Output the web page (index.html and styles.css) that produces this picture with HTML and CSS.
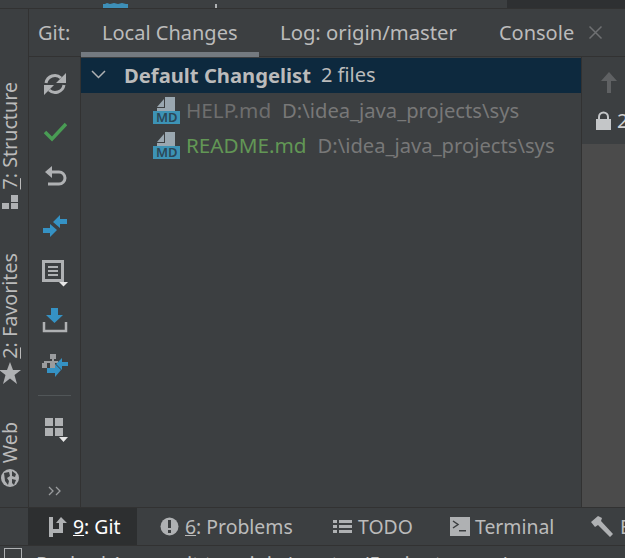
FILE: index.html
```html
<!DOCTYPE html>
<html lang="en">
  <head>
    <meta charset="UTF-8" />
    <title>Git tool window</title>
    <link rel="stylesheet" href="styles.css">
  </head>
  <body>
    <div class="top-strip">
      <div class="top-tree">
        <svg class="top-icon" width="25" height="8" viewBox="0 0 25 8"><path d="M0 4h2l2-1 3 1 4-1 4 1 4-1 4 1h2v4H0z" fill="#3d8fb8"/></svg>
        <span class="top-tick"></span>
      </div>
      <div class="top-editor"></div>
    </div>

    <div class="middle">
      <aside class="side-stripe">
        <div class="side-item side-structure">
          <svg width="18" height="18" viewBox="0 0 18 18"><path d="M1 11h7v6H1zM10 3h7v7h-7zM10 11h7v6h-7z" fill="#afb1b3"/></svg>
          <span class="side-label"><u>7</u>: Structure</span>
        </div>
        <div class="side-item side-favorites">
          <svg width="22" height="22" viewBox="0 0 22 22"><path d="M11 0l3 8h8l-6.500 5 2.500 9-7-5.500L4 22l2.500-9L0 8h8z" fill="#afb1b3"/></svg>
          <span class="side-label"><u>2</u>: Favorites</span>
        </div>
        <div class="side-item side-web">
          <svg width="20" height="20" viewBox="0 0 20 20"><circle cx="10" cy="10" r="9" fill="#afb1b3"/><path d="M4 5l5-1 1 4-3 2 2 3-1 4-3-4zM12 3l4 3-1 3-3-1zM12 11l4 1-2 5-2-2z" fill="#3c3f41"/></svg>
          <span class="side-label">Web</span>
        </div>
      </aside>

      <section class="tool-window">
        <header class="tabs">
          <span class="tabs-title">Git:</span>
          <span class="tab tab-active">Local Changes</span>
          <span class="tab tab-log">Log: origin/master</span>
          <span class="tab tab-console">Console</span>
          <svg class="tab-close" width="15" height="15" viewBox="0 0 15 15"><path d="M1.500 1.500l12 12M13.500 1.500l-12 12" stroke="#6e7072" stroke-width="1.500"/></svg>
        </header>

        <div class="panes">
          <nav class="toolbar">
            <span class="tool-slot"><svg width="24" height="24" viewBox="0 0 24 24"><path d="M3 11a9 9 0 0 1 15-5M21 13a9 9 0 0 1-15 5" fill="none" stroke="#afb1b3" stroke-width="3"/><path d="M23 1v10H13zM1 23V13h10z" fill="#afb1b3"/></svg></span>
            <span class="tool-slot"><svg width="24" height="24" viewBox="0 0 24 24"><path d="M2 13l7 7L23 5" fill="none" stroke="#499c54" stroke-width="3.500"/></svg></span>
            <span class="tool-slot"><svg width="24" height="24" viewBox="0 0 24 24"><path d="M8 6h8a6 6 0 0 1 0 12H5" fill="none" stroke="#afb1b3" stroke-width="3"/><path d="M9 0v12L2 6z" fill="#afb1b3"/></svg></span>
            <span class="tool-slot"><svg width="26" height="26" viewBox="0 0 26 26"><path d="M1 15h7v-4l7 6-7 7v-4H1zM25 11h-7v4l-7-6 7-7v4h7z" fill="#3592c4"/></svg></span>
            <span class="tool-slot"><svg width="28" height="28" viewBox="0 0 28 28"><path d="M2.500 2.500h19v19h-19z" fill="none" stroke="#afb1b3" stroke-width="3"/><path d="M7 7h10v2H7zM7 11h10v2H7zM7 15h10v2H7z" fill="#afb1b3"/><path d="M18 23h9l-4.500 4.500z" fill="#e6e6e6"/></svg></span>
            <span class="tool-slot"><svg width="26" height="26" viewBox="0 0 26 26"><path d="M9 1h7v7h5l-8.500 8L4 8h5z" fill="#3592c4"/><path d="M2 15v9h22v-9" fill="none" stroke="#afb1b3" stroke-width="2.500"/></svg></span>
            <span class="tool-slot"><svg width="28" height="28" viewBox="0 0 28 28"><path d="M9 1h6v5H9zM1 10h5v5H1zM9 10h5v5H9zM11 6h2v4h-2zM3 8h14v2H3z" fill="#9a9c9e"/><path d="M6 15h8v-4l6 6-6 7v-4H6zM27 13h-6v4l-6-6 6-6v4h6z" fill="#3592c4"/></svg></span>
            <span class="tool-sep"></span>
            <span class="tool-slot tool-slot-grid"><svg width="28" height="28" viewBox="0 0 28 28"><path d="M4 1h8v8H4zM14 1h8v8h-8zM4 11h8v8H4zM14 11h8v8h-8z" fill="#afb1b3"/><path d="M18 20h9l-4.500 5z" fill="#e6e6e6"/></svg></span>
            <svg class="tool-more" width="14" height="10" viewBox="0 0 14 10"><path d="M1 1l4 4-4 4M8 1l4 4-4 4" fill="none" stroke="#9a9c9e" stroke-width="1.300"/></svg>
          </nav>

          <main class="tree">
            <div class="changelist">
              <svg class="chevron" width="15" height="9" viewBox="0 0 15 9"><path d="M1 1l6.500 6.500L14 1" fill="none" stroke="#afb1b3" stroke-width="1.500"/></svg>
              <strong class="changelist-name">Default Changelist</strong>
              <span class="changelist-count">2 files</span>
            </div>
            <div class="file-row">
              <svg class="file-icon" width="27" height="27" viewBox="0 0 27 27"><path d="M12 0h10v15H4v-4h8zM4 10l7-8v8z" fill="#9aa7b0"/><rect y="14" width="27" height="13" fill="#3d93b5"/><text class="file-badge" x="3" y="25">MD</text></svg>
              <span class="file-name file-plain">HELP.md</span>
              <span class="file-path">D:\idea_java_projects\sys</span>
            </div>
            <div class="file-row">
              <svg class="file-icon" width="27" height="27" viewBox="0 0 27 27"><path d="M12 0h10v15H4v-4h8zM4 10l7-8v8z" fill="#9aa7b0"/><rect y="14" width="27" height="13" fill="#3d93b5"/><text class="file-badge" x="3" y="25">MD</text></svg>
              <span class="file-name file-new">README.md</span>
              <span class="file-path">D:\idea_java_projects\sys</span>
            </div>
          </main>

          <aside class="details">
            <div class="details-head">
              <svg class="details-arrow" width="18" height="22" viewBox="0 0 18 22"><path d="M9 1l8 9h-6v12H7V10H1z" fill="#5f6163"/></svg>
              <div class="details-lock">
                <svg width="15" height="20" viewBox="0 0 15 20"><path d="M3 9V6a4.500 4.500 0 0 1 9 0v3" fill="none" stroke="#c4c6c8" stroke-width="2"/><rect y="8" width="15" height="11" fill="#c4c6c8"/></svg>
                <span>2</span>
              </div>
            </div>
            <div class="details-body"></div>
          </aside>
        </div>
      </section>
    </div>

    <footer class="bottom-bar">
      <span class="bottom-tab bottom-tab-active">
        <svg width="20" height="20" viewBox="0 0 20 20"><path d="M0 0h4v20H0zM4 12h6V6H7l5-6 6 6h-4v10H4z" fill="#afb1b3"/></svg>
        <span><u>9</u>: Git</span>
      </span>
      <span class="bottom-tab bottom-tab-problems">
        <svg width="19" height="19" viewBox="0 0 19 19"><circle cx="9.500" cy="9.500" r="9" fill="#afb1b3"/><path d="M8 3h3v8H8zM8 13h3v3H8z" fill="#3c3f41"/></svg>
        <span><u>6</u>: Problems</span>
      </span>
      <span class="bottom-tab bottom-tab-todo">
        <svg width="19" height="16" viewBox="0 0 19 16"><path d="M0 1h4v3H0zM6 1h13v3H6zM0 6h4v3H0zM6 6h13v3H6zM0 11h4v3H0zM6 11h13v3H6z" fill="#afb1b3"/></svg>
        <span>TODO</span>
      </span>
      <span class="bottom-tab bottom-tab-terminal">
        <svg width="20" height="19" viewBox="0 0 20 19"><rect width="20" height="19" fill="#afb1b3"/><path d="M3 4l5 3.500L3 11" fill="none" stroke="#3c3f41" stroke-width="1.500"/><path d="M9 13h7v1.500H9z" fill="#3c3f41"/></svg>
        <span>Terminal</span>
      </span>
      <span class="bottom-tab bottom-tab-build">
        <svg width="23" height="22" viewBox="0 0 23 22"><path d="M0 6l7-6 4 2-1 3 12 13-3 3L7 9 4 11z" fill="#afb1b3"/></svg>
        <span>Build</span>
      </span>
    </footer>

    <div class="status-bar">
      <span class="status-box"></span>
      <span class="status-text">Pushed 1 commit to origin/master (5 minutes ago)</span>
    </div>
  </body>
</html>
```

FILE: styles.css
```css
* {
  box-sizing: border-box;
}

html, body {
  margin: 0;
  height: 100%;
}

body {
  display: flex;
  flex-direction: column;
  height: 558px;
  overflow: hidden;
  background-color: #3c3f41;
  color: #bbbbbb;
  font-family: "Noto Sans", sans-serif;
  font-size: 20px;
}

svg {
  display: block;
  flex: none;
}

/* strip of the editor above the tool window */
.top-strip {
  display: flex;
  flex: none;
  height: 9px;
  overflow: hidden;
  border-bottom: 1px solid #323232;
}

.top-tree {
  display: flex;
  gap: 87px;
  width: 507px;
  padding-left: 103px;
}

.top-tick {
  width: 2px;
  height: 8px;
  margin-top: 4px;
  background-color: #afb1b3;
}

.top-editor {
  flex: 1;
  background-color: #2e3032;
}

.middle {
  display: flex;
  flex: 1;
  min-height: 0;
}

.side-stripe {
  display: flex;
  flex: none;
  flex-direction: column;
  width: 29px;
  padding-top: 73px;
  border-right: 1px solid #323232;
}

.side-item {
  display: flex;
  flex-direction: column-reverse;
  align-items: center;
  gap: 3px;
  width: 20px;
}

.side-structure {
  height: 128px;
}

.side-favorites {
  margin-top: 44px;
  height: 130px;
}

.side-web {
  margin-top: 36px;
  height: 68px;
  gap: 5px;
}

.side-label {
  writing-mode: vertical-rl;
  transform: rotate(180deg);
  font-size: 19.700px;
  line-height: 20px;
  white-space: nowrap;
}

.tool-window {
  display: flex;
  flex: 1;
  flex-direction: column;
  min-width: 0;
}

.tabs {
  display: flex;
  flex: none;
  align-items: center;
  height: 48px;
  padding-left: 9px;
  border-bottom: 1px solid #323232;
}

.tabs-title {
  width: 43px;
  padding-bottom: 1px;
}

.tab {
  display: flex;
  align-items: center;
  height: 48px;
  margin-bottom: -1px;
  padding: 0 21px 2px;
  white-space: nowrap;
}

.tab-active {
  width: 178px;
  border-bottom: 5px solid #747a80;
  padding-top: 3px;
  padding-bottom: 0;
}

.tab-log {
  font-size: 20.300px;
}

.tab-console {
  padding: 0 0 2px 21px;
}

.tab-close {
  margin-left: 14px;
}

.panes {
  display: flex;
  flex: 1;
  min-height: 0;
}

.toolbar {
  display: flex;
  flex: none;
  flex-direction: column;
  align-items: center;
  width: 52px;
  padding-top: 3px;
  border-right: 1px solid #323232;
}

.tool-slot {
  display: flex;
  flex: none;
  align-items: center;
  justify-content: center;
  width: 30px;
  height: 47.300px;
}

.tool-sep {
  flex: none;
  width: 33px;
  height: 1px;
  margin: 4px 0 11px;
  background-color: #515658;
}

.tool-more {
  margin-top: 32px;
}

.tree {
  flex: 1;
  min-width: 0;
  padding-top: 1px;
}

.changelist {
  display: flex;
  align-items: center;
  height: 35px;
  padding-bottom: 2px;
  background-color: #0d293e;
}

.chevron {
  margin-left: 10px;
  margin-right: 18px;
}

.changelist-name {
  font-size: 20.200px;
  font-weight: 700;
  margin-right: 10px;
}

.file-row {
  display: flex;
  align-items: center;
  height: 35px;
  padding-left: 72px;
  white-space: nowrap;
}

.file-icon {
  margin-right: 6px;
}

.file-badge {
  fill: #2b4757;
  font-size: 13px;
  font-weight: 600;
}

.file-name {
  margin-right: 11px;
  padding-bottom: 2px;
  font-size: 20.700px;
}

.file-plain {
  color: #6e6e6e;
}

.file-new {
  color: #629755;
}

.file-path {
  padding-bottom: 2px;
  color: #787878;
  font-size: 20.200px;
}

.details {
  display: flex;
  flex: none;
  flex-direction: column;
  width: 44px;
  border-left: 1px solid #323232;
  overflow: hidden;
}

.details-head {
  flex: none;
  height: 87px;
  padding: 14px 0 0 18px;
}

.details-arrow {
  margin-bottom: 14px;
}

.details-lock {
  display: flex;
  align-items: center;
  gap: 6px;
  margin-left: -4px;
  color: #d0d0d0;
}

.details-body {
  flex: 1;
  background-color: #4b4b4b;
}

.bottom-bar {
  display: flex;
  flex: none;
  align-items: stretch;
  height: 39px;
  padding-left: 28px;
  border-top: 1px solid #323232;
  border-bottom: 1px solid #323232;
  font-size: 19.400px;
  overflow: hidden;
  white-space: nowrap;
}

.bottom-tab {
  display: flex;
  flex: none;
  align-items: center;
  gap: 6px;
  padding-left: 21px;
}

.bottom-tab-active {
  width: 109px;
  gap: 4px;
  background-color: #2d2f30;
  color: #ffffff;
}

.bottom-tab-problems {
  padding-left: 23px;
  width: 196px;
}

.bottom-tab-todo {
  padding-left: 0;
  width: 117px;
}

.bottom-tab-terminal {
  padding-left: 0;
  width: 141px;
  gap: 5px;
}

.bottom-tab-build {
  padding-left: 0;
}

.status-bar {
  display: flex;
  flex: none;
  align-items: flex-start;
  gap: 14px;
  height: 12px;
  padding: 2px 0 0 4px;
  overflow: hidden;
}

.status-box {
  flex: none;
  width: 18px;
  height: 18px;
  border: 1px solid #afb1b3;
}

.status-text {
  padding-top: 6px;
  white-space: nowrap;
  line-height: 20px;
}
```
